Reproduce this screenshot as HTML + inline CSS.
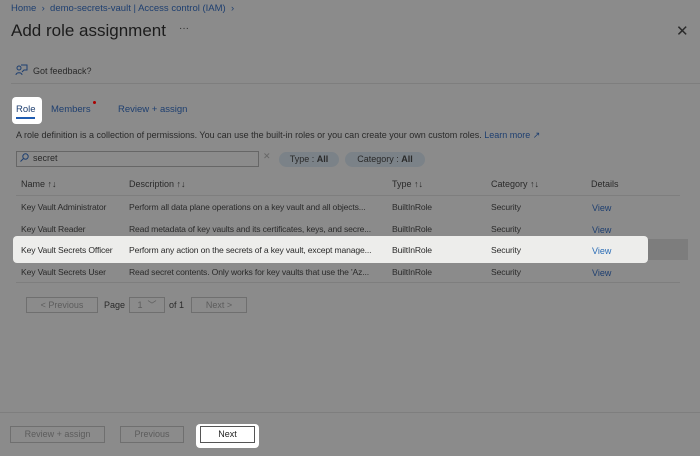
<!DOCTYPE html>
<html><head><style>
body{margin:0;width:700px;height:456px;background:#8b8b8b;font-family:"Liberation Sans",sans-serif;position:relative;overflow:hidden;color:#2a2a2a}
.a{position:absolute;white-space:nowrap}
.l{color:#1e3f70}
.s{font-size:9px}
.d{font-size:8.6px;letter-spacing:-0.15px}
.hl{position:absolute;background:#fff;border-radius:4px}
.ln{position:absolute;height:1px;background:#7e7e7e}
.btn{position:absolute;border:1px solid #6f6f6f;font-size:9px;color:#5c5c5c;text-align:center;box-sizing:border-box}
</style></head><body>
<div class="a l" style="left:11px;top:3px;font-size:9.5px">Home &nbsp;›&nbsp; demo-secrets-vault | Access control (IAM) &nbsp;›</div>
<div class="a" style="left:11px;top:21px;font-size:17px;color:#1c1c1c;font-weight:500">Add role assignment</div>
<div class="a" style="left:179px;top:23px;font-size:10px">···</div>
<div class="a" style="left:676px;top:22px;font-size:15px">✕</div>
<svg class="a" style="left:15px;top:64px" width="13" height="13" viewBox="0 0 13 13" fill="none" stroke="#1e3f70" stroke-width="1"><circle cx="4" cy="4" r="2"/><path d="M1 11c0-3 6-3 6 0M6 1h6v5H9l-2 2"/></svg>
<div class="a s" style="left:33px;top:66px">Got feedback?</div>
<div class="ln" style="left:11px;top:83px;width:689px"></div>
<div class="hl" style="left:12px;top:97px;width:30px;height:27px"></div>
<div class="a l" style="left:16px;top:104px;font-size:9.5px">Role</div>
<div class="a" style="left:16px;top:117px;width:19px;height:2px;background:#1e5bb0"></div>
<div class="a l" style="left:51px;top:104px;font-size:9.5px">Members</div>
<div class="a" style="left:93px;top:101px;width:3px;height:3px;border-radius:50%;background:#a00"></div>
<div class="a l" style="left:118px;top:104px;font-size:9.5px">Review + assign</div>
<div class="a s" style="left:16px;top:130px">A role definition is a collection of permissions. You can use the built-in roles or you can create your own custom roles. <span class="l">Learn more ↗</span></div>
<div class="a" style="left:16px;top:151px;width:241px;height:14px;border:1px solid #666"></div>
<svg class="a" style="left:20px;top:153px" width="9" height="9" viewBox="0 0 9 9" fill="none" stroke="#1e3f70" stroke-width="1"><circle cx="5.5" cy="3.5" r="2.7"/><path d="M3.5 5.5L0.5 8.5"/></svg>
<div class="a s" style="left:33px;top:153px">secret</div>
<div class="a s" style="left:263px;top:151px;color:#666">✕</div>
<div class="a s" style="left:279px;top:152px;width:60px;height:15px;border-radius:8px;background:#7b8288;line-height:15px;text-align:center">Type : <b>All</b></div>
<div class="a s" style="left:345px;top:152px;width:80px;height:15px;border-radius:8px;background:#7b8288;line-height:15px;text-align:center">Category : <b>All</b></div>
<div class="a s" style="left:21px;top:179px">Name ↑↓</div>
<div class="a s" style="left:129px;top:179px">Description ↑↓</div>
<div class="a s" style="left:392px;top:179px">Type ↑↓</div>
<div class="a s" style="left:491px;top:179px">Category ↑↓</div>
<div class="a s" style="left:591px;top:179px">Details</div>
<div class="ln" style="left:16px;top:195px;width:664px"></div>
<div class="a" style="left:16px;top:239px;width:672px;height:21px;background:#7d7d7d"></div>
<div class="hl" style="left:13px;top:236px;width:635px;height:27px;background:#ededeb"></div>
<div class="a d" style="left:21px;top:202px">Key Vault Administrator</div><div class="a d" style="left:129px;top:202px">Perform all data plane operations on a key vault and all objects...</div><div class="a d" style="left:392px;top:202px">BuiltInRole</div><div class="a d" style="left:491px;top:202px">Security</div><div class="a s l" style="left:592px;top:203px">View</div>
<div class="a d" style="left:21px;top:224px">Key Vault Reader</div><div class="a d" style="left:129px;top:224px">Read metadata of key vaults and its certificates, keys, and secre...</div><div class="a d" style="left:392px;top:224px">BuiltInRole</div><div class="a d" style="left:491px;top:224px">Security</div><div class="a s l" style="left:592px;top:225px">View</div>
<div class="a d" style="left:21px;top:245px">Key Vault Secrets Officer</div><div class="a d" style="left:129px;top:245px">Perform any action on the secrets of a key vault, except manage...</div><div class="a d" style="left:392px;top:245px">BuiltInRole</div><div class="a d" style="left:491px;top:245px">Security</div><div class="a s" style="left:592px;top:246px;color:#2a6cb5">View</div>
<div class="a d" style="left:21px;top:267px">Key Vault Secrets User</div><div class="a d" style="left:129px;top:267px">Read secret contents. Only works for key vaults that use the 'Az...</div><div class="a d" style="left:392px;top:267px">BuiltInRole</div><div class="a d" style="left:491px;top:267px">Security</div><div class="a s l" style="left:592px;top:268px">View</div>
<div class="ln" style="left:16px;top:282px;width:664px"></div>
<div class="btn" style="left:26px;top:297px;width:72px;height:16px;line-height:14px">&lt; Previous</div>
<div class="a s" style="left:104px;top:300px">Page</div>
<div class="btn" style="left:129px;top:297px;width:36px;height:16px;line-height:14px">1 &nbsp;﹀</div>
<div class="a s" style="left:169px;top:300px">of 1</div>
<div class="btn" style="left:191px;top:297px;width:56px;height:16px;line-height:14px">Next &gt;</div>
<div class="ln" style="left:0;top:412px;width:700px"></div>
<div class="btn" style="left:10px;top:426px;width:95px;height:17px;line-height:15px">Review + assign</div>
<div class="btn" style="left:120px;top:426px;width:64px;height:17px;line-height:15px">Previous</div>
<div class="hl" style="left:196px;top:424px;width:63px;height:24px"></div>
<div class="btn" style="left:200px;top:426px;width:55px;height:17px;line-height:15px;color:#222;border-color:#555">Next</div>
</body></html>
